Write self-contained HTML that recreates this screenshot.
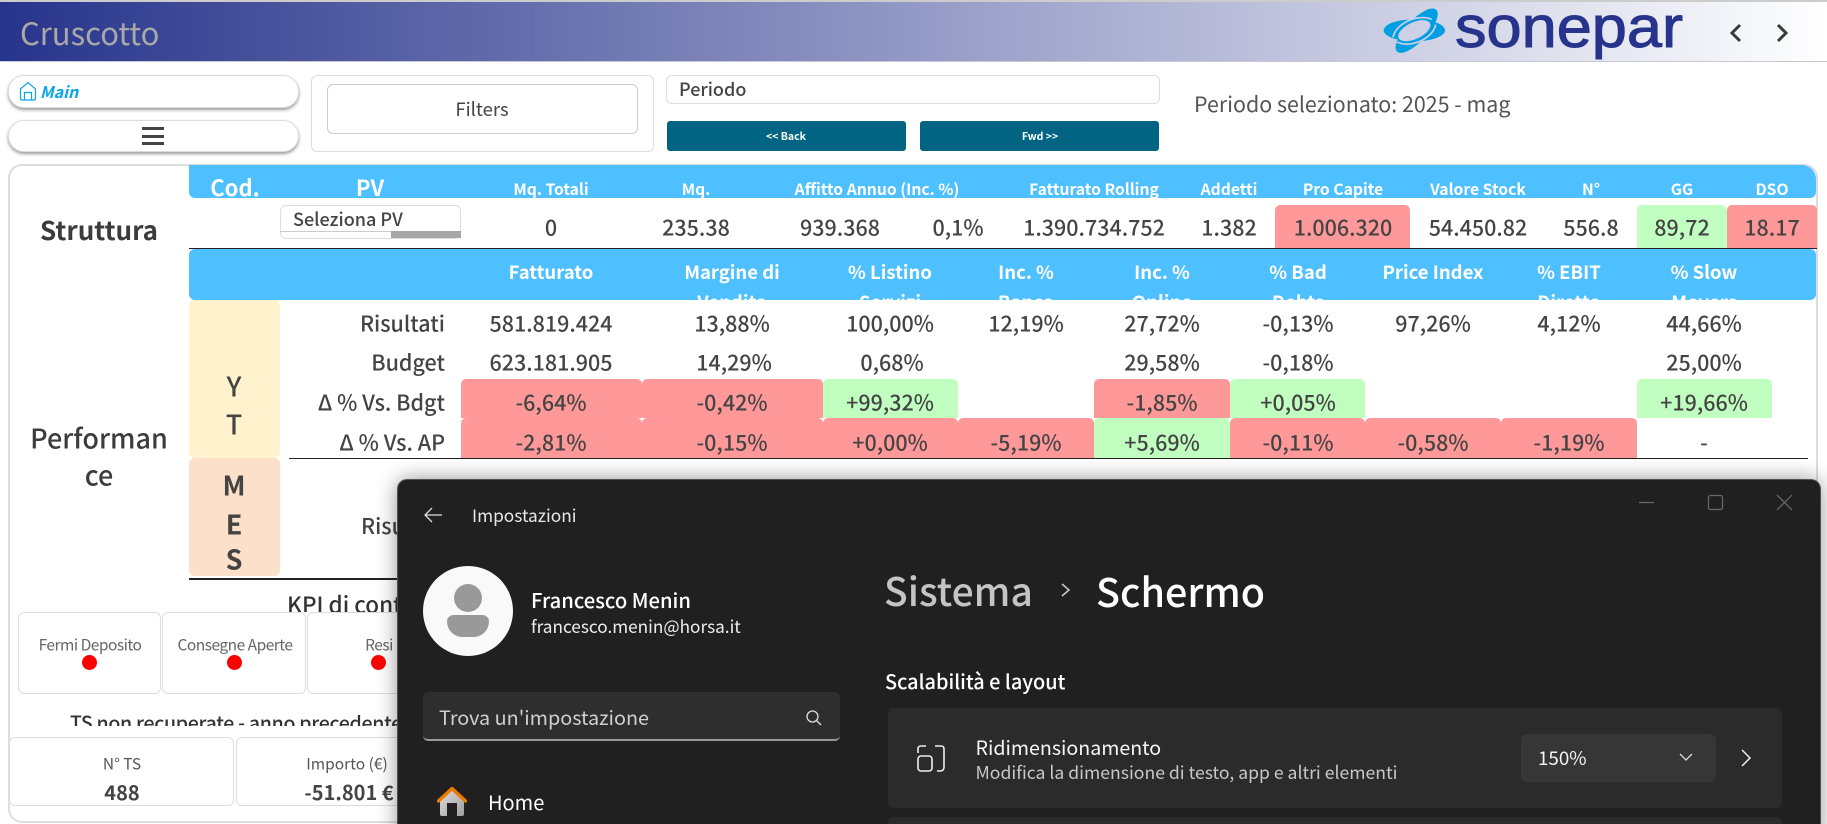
<!DOCTYPE html>
<html lang="it"><head><meta charset="utf-8"><title>Cruscotto</title>
<style>
*{box-sizing:border-box}
html,body{margin:0;padding:0;width:1827px;height:824px;overflow:hidden;background:#fff}
body{position:relative;font-family:"Noto Sans CJK JP","Liberation Sans",sans-serif;color:#444}
.a{position:absolute}
.t{position:absolute;white-space:nowrap;line-height:1}
.c{position:absolute;white-space:nowrap;line-height:1;transform:translate(-50%,-50%);text-align:center}
.v{font-size:21.5px;font-weight:500;color:#444}
.l{position:absolute;white-space:nowrap;line-height:1;transform:translateY(-50%);right:1382px;font-size:21.5px;font-weight:500;color:#444}
.h1{font-size:15.7px;font-weight:700;color:#fff}
.h2{font-size:18.5px;font-weight:700;color:#fff;line-height:30px;white-space:normal;text-align:center;transform:translateX(-50%);position:absolute;top:257px;width:130px}
.r{position:absolute;background:#ff9999;border-radius:5px 5px 0 0}
.g{position:absolute;background:#c1ffc1;border-radius:5px 5px 0 0}
.box{position:absolute;background:#fff;border:1px solid #ddd;border-radius:6px}
.k{font-size:15.5px;color:#666;font-weight:400;letter-spacing:-.5px}
.dot{position:absolute;width:15px;height:15px;border-radius:50%;background:#f00}
</style></head><body>

<!-- header -->
<div class="a" style="left:0;top:0;width:1827px;height:62px;background:linear-gradient(90deg,#27348b,#fff);border-top:2px solid #ccc;border-bottom:1px solid #c8c8d4"></div>
<div class="t" style="left:20px;top:16px;font-size:31px;color:#a9a9a9;font-weight:400">Cruscotto</div>
<svg class="a" style="left:1375px;top:0" width="90" height="62" viewBox="0 0 270 186">
<g fill="#009fe3">
<ellipse cx="118" cy="91" rx="92" ry="33"/>
<ellipse cx="125" cy="92" rx="86" ry="32" transform="rotate(-47 125 92)"/>
</g>
<ellipse cx="118" cy="92" rx="52" ry="25" transform="rotate(-25 118 92)" fill="#ced1e5"/>
<g fill="none" stroke="#ced1e5" stroke-width="5">
<path d="M54 112C62 70 128 40 170 58"/>
<path d="M182 74C174 116 106 146 66 126"/>
</g></svg>
<svg class="a" style="left:1450px;top:0" width="240" height="62"><text x="5" y="47" font-family="Liberation Sans" font-size="58" fill="#27348b" stroke="#27348b" stroke-width="1" textLength="228" lengthAdjust="spacingAndGlyphs">sonepar</text></svg>
<svg class="a" style="left:1725px;top:22px" width="70" height="22" fill="none" stroke="#3a3a3a" stroke-width="3"><path d="M15 3L7 11L15 19"/><path d="M53 3L61 11L53 19"/></svg>

<!-- left buttons -->
<div class="a" style="left:8px;top:75px;width:291px;height:33px;border:1px solid #ddd;border-radius:16px;box-shadow:0 2px 3px rgba(0,0,0,.4);background:#fff"></div>
<svg class="a" style="left:19px;top:81px" width="18" height="20" fill="none" stroke="#0ea5e9" stroke-width="1.2"><path d="M1.5 8L9 1.5L16.5 8V17.5Q16.5 19 15 19H3Q1.5 19 1.5 17.5Z"/><path d="M5.5 19V11.5H12.5V19"/></svg>
<div class="t" style="left:40px;top:83px;font-size:16px;font-weight:700;font-style:italic;color:#0ea5e9">Main</div>
<div class="a" style="left:8px;top:120px;width:291px;height:32px;border:1px solid #ddd;border-radius:16px;box-shadow:0 2px 3px rgba(0,0,0,.4);background:#fff"></div>
<div class="a" style="left:142px;top:127px;width:22px;height:18px;border-top:3px solid #444;border-bottom:3px solid #444"></div>
<div class="a" style="left:142px;top:135px;width:22px;height:3px;background:#444"></div>

<!-- filters -->
<div class="box" style="left:311px;top:75px;width:343px;height:77px"></div>
<div class="box" style="left:327px;top:84px;width:311px;height:50px;border-color:#ccc"></div>
<div class="c" style="left:482px;top:109px;font-size:18.5px;color:#444">Filters</div>
<div class="box" style="left:666px;top:75px;width:494px;height:29px"></div>
<div class="t" style="left:679px;top:80px;font-size:18px;font-weight:500;color:#444">Periodo</div>
<div class="a" style="left:667px;top:121px;width:239px;height:30px;background:#006482;border-radius:3px"></div>
<div class="a" style="left:920px;top:121px;width:239px;height:30px;background:#006482;border-radius:3px"></div>
<div class="c" style="left:786px;top:137px;font-size:10.5px;font-weight:700;color:#fff">&lt;&lt; Back</div>
<div class="c" style="left:1040px;top:137px;font-size:10.5px;font-weight:700;color:#fff">Fwd &gt;&gt;</div>
<div class="t" style="left:1194px;top:93px;font-size:21.4px;color:#555">Periodo selezionato: 2025 - mag</div>

<!-- card -->
<div class="a" style="left:8px;top:164px;width:1810px;height:659px;border:2px solid #ddd;border-radius:14px;background:#fff"></div>
<div class="a" style="left:189px;top:165px;width:1627px;height:33px;background:#4fc0ff;border-radius:0 14px 6px 6px;overflow:hidden">
 <div class="c h1" style="left:46px;top:22px;font-size:22px">Cod.</div>
 <div class="c h1" style="left:181px;top:22px;font-size:22px">PV</div>
 <div class="c h1" style="left:362px;top:24px">Mq. Totali</div>
 <div class="c h1" style="left:507px;top:24px">Mq.</div>
 <div class="c h1" style="left:688px;top:24px">Affitto Annuo (Inc. %)</div>
 <div class="c h1" style="left:905px;top:24px">Fatturato Rolling</div>
 <div class="c h1" style="left:1040px;top:24px">Addetti</div>
 <div class="c h1" style="left:1154px;top:24px">Pro Capite</div>
 <div class="c h1" style="left:1289px;top:24px">Valore Stock</div>
 <div class="c h1" style="left:1402px;top:24px">N°</div>
 <div class="c h1" style="left:1493px;top:24px">GG</div>
 <div class="c h1" style="left:1583px;top:24px">DSO</div>
</div>
<div class="c" style="left:99px;top:230px;font-size:26px;font-weight:700;color:#3c3c3c">Struttura</div>

<div class="box" style="left:280px;top:205px;width:181px;height:34px"></div>
<div class="t" style="left:293px;top:210px;font-size:18px;font-weight:500;color:#444">Seleziona PV</div>
<div class="a" style="left:280px;top:231px;width:181px;height:1px;background:#ccc"></div>
<div class="a" style="left:391px;top:231px;width:70px;height:7px;background:#a6a6a6"></div>

<div class="r" style="left:1275px;top:205px;width:135px;height:43px"></div>
<div class="g" style="left:1637px;top:205px;width:90px;height:43px"></div>
<div class="r" style="left:1727px;top:205px;width:90px;height:43px"></div>
<div class="c v" style="left:551px;top:227px">0</div>
<div class="c v" style="left:696px;top:227px">235.38</div>
<div class="c v" style="left:840px;top:227px">939.368</div>
<div class="c v" style="left:958px;top:227px">0,1%</div>
<div class="c v" style="left:1094px;top:227px">1.390.734.752</div>
<div class="c v" style="left:1229px;top:227px">1.382</div>
<div class="c v" style="left:1343px;top:227px">1.006.320</div>
<div class="c v" style="left:1478px;top:227px">54.450.82</div>
<div class="c v" style="left:1591px;top:227px">556.8</div>
<div class="c v" style="left:1682px;top:227px">89,72</div>
<div class="c v" style="left:1772px;top:227px">18.17</div>

<div class="a" style="left:189px;top:248px;width:1628px;height:1px;background:#222"></div>

<!-- blue header 2 -->
<div class="a" style="left:189px;top:249px;width:1627px;height:51px;background:#4fc0ff;border-radius:6px;overflow:hidden">
 <div class="h2" style="left:362px;top:8px">Fatturato</div>
 <div class="h2" style="left:543px;top:8px">Margine di Vendita</div>
 <div class="h2" style="left:701px;top:8px">% Listino Servizi</div>
 <div class="h2" style="left:837px;top:8px;width:100px">Inc. % Banco</div>
 <div class="h2" style="left:973px;top:8px;width:100px">Inc. % Online</div>
 <div class="h2" style="left:1109px;top:8px;width:100px">% Bad Debts</div>
 <div class="h2" style="left:1244px;top:8px">Price Index</div>
 <div class="h2" style="left:1380px;top:8px;width:100px">% EBIT Diretto</div>
 <div class="h2" style="left:1515px;top:8px;width:100px">% Slow Movers</div>
</div>

<!-- YT / MES -->
<div class="a" style="left:189px;top:300px;width:91px;height:158px;background:#fff2cc;border-radius:6px"></div>
<div class="c" style="left:234px;top:385px;font-size:27px;font-weight:500;color:#444">Y</div>
<div class="c" style="left:234px;top:423px;font-size:27px;font-weight:500;color:#444">T</div>
<div class="a" style="left:189px;top:458px;width:91px;height:118px;background:#fde0c9;border-radius:6px"></div>
<div class="c" style="left:234px;top:484px;font-size:27px;font-weight:700;color:#444">M</div>
<div class="c" style="left:234px;top:523px;font-size:27px;font-weight:700;color:#444">E</div>
<div class="c" style="left:234px;top:558px;font-size:27px;font-weight:700;color:#444">S</div>
<div class="c" style="left:99px;top:437px;font-size:27px;font-weight:500;color:#3c3c3c">Performan</div>
<div class="c" style="left:99px;top:474px;font-size:27px;font-weight:500;color:#3c3c3c">ce</div>

<!-- labels -->
<div class="l" style="top:323px">Risultati</div>
<div class="l" style="top:362px">Budget</div>
<div class="l" style="top:402px">Δ % Vs. Bdgt</div>
<div class="l" style="top:442px">Δ % Vs. AP</div>

<!-- coloured cells -->
<div class="r" style="left:461px;top:379px;width:181px;height:39px"></div>
<div class="r" style="left:642px;top:379px;width:181px;height:39px"></div>
<div class="g" style="left:823px;top:379px;width:135px;height:39px"></div>
<div class="r" style="left:1094px;top:379px;width:136px;height:39px"></div>
<div class="g" style="left:1230px;top:379px;width:135px;height:39px"></div>
<div class="g" style="left:1637px;top:379px;width:135px;height:39px"></div>
<div class="r" style="left:461px;top:418px;width:181px;height:40px"></div>
<div class="r" style="left:642px;top:418px;width:181px;height:40px"></div>
<div class="r" style="left:823px;top:418px;width:135px;height:40px"></div>
<div class="r" style="left:958px;top:418px;width:136px;height:40px"></div>
<div class="g" style="left:1094px;top:418px;width:136px;height:40px"></div>
<div class="r" style="left:1230px;top:418px;width:135px;height:40px"></div>
<div class="r" style="left:1365px;top:418px;width:136px;height:40px"></div>
<div class="r" style="left:1501px;top:418px;width:136px;height:40px"></div>
<div class="a" style="left:289px;top:458px;width:1519px;height:1px;background:#222"></div>

<!-- values -->
<div class="c v" style="left:551px;top:323px">581.819.424</div>
<div class="c v" style="left:732px;top:323px">13,88%</div>
<div class="c v" style="left:890px;top:323px">100,00%</div>
<div class="c v" style="left:1026px;top:323px">12,19%</div>
<div class="c v" style="left:1162px;top:323px">27,72%</div>
<div class="c v" style="left:1298px;top:323px">-0,13%</div>
<div class="c v" style="left:1433px;top:323px">97,26%</div>
<div class="c v" style="left:1569px;top:323px">4,12%</div>
<div class="c v" style="left:1704px;top:323px">44,66%</div>
<div class="c v" style="left:551px;top:362px">623.181.905</div>
<div class="c v" style="left:734px;top:362px">14,29%</div>
<div class="c v" style="left:892px;top:362px">0,68%</div>
<div class="c v" style="left:1162px;top:362px">29,58%</div>
<div class="c v" style="left:1298px;top:362px">-0,18%</div>
<div class="c v" style="left:1704px;top:362px">25,00%</div>
<div class="c v" style="left:551px;top:402px">-6,64%</div>
<div class="c v" style="left:732px;top:402px">-0,42%</div>
<div class="c v" style="left:890px;top:402px">+99,32%</div>
<div class="c v" style="left:1162px;top:402px">-1,85%</div>
<div class="c v" style="left:1298px;top:402px">+0,05%</div>
<div class="c v" style="left:1704px;top:402px">+19,66%</div>
<div class="c v" style="left:551px;top:442px">-2,81%</div>
<div class="c v" style="left:732px;top:442px">-0,15%</div>
<div class="c v" style="left:890px;top:442px">+0,00%</div>
<div class="c v" style="left:1026px;top:442px">-5,19%</div>
<div class="c v" style="left:1162px;top:442px">+5,69%</div>
<div class="c v" style="left:1298px;top:442px">-0,11%</div>
<div class="c v" style="left:1433px;top:442px">-0,58%</div>
<div class="c v" style="left:1569px;top:442px">-1,19%</div>
<div class="c v" style="left:1704px;top:442px">-</div>

<div class="t" style="left:361px;top:515px;font-size:21.5px;font-weight:500;color:#444">Risultati</div>
<div class="a" style="left:189px;top:578px;width:400px;height:2px;background:#222"></div>

<div class="a" style="left:287px;top:590px;width:200px;height:22px;overflow:hidden"><div class="t" style="left:0;top:3px;font-size:22.5px;font-weight:500;color:#333">KPI di controllo</div></div>

<div class="box" style="left:18px;top:612px;width:143px;height:82px"></div>
<div class="box" style="left:162px;top:612px;width:144px;height:82px"></div>
<div class="box" style="left:307px;top:612px;width:144px;height:82px"></div>
<div class="c k" style="left:90px;top:645px">Fermi Deposito</div>
<div class="c k" style="left:235px;top:645px">Consegne Aperte</div>
<div class="c k" style="left:379px;top:645px">Resi</div>
<div class="dot" style="left:82px;top:655px"></div>
<div class="dot" style="left:227px;top:655px"></div>
<div class="dot" style="left:371px;top:655px"></div>

<div class="a" style="left:70px;top:710px;width:400px;height:16px;overflow:hidden"><div class="t" style="left:0;top:2px;font-size:19.5px;font-weight:500;letter-spacing:-.3px;color:#333">TS non recuperate - anno precedente</div></div>

<div class="box" style="left:9px;top:737px;width:225px;height:69px"></div>
<div class="box" style="left:236px;top:737px;width:225px;height:69px"></div>
<div class="c" style="left:122px;top:764px;font-size:15.5px;color:#555">N° TS</div>
<div class="c" style="left:122px;top:792px;font-size:20px;font-weight:700;color:#444">488</div>
<div class="c" style="left:347px;top:764px;font-size:15.5px;color:#555">Importo (€)</div>
<div class="c" style="left:349px;top:792px;font-size:20px;font-weight:700;color:#444">-51.801 €</div>

<!-- settings window -->
<div class="a" style="left:398px;top:480px;width:1422px;height:360px;background:#202020;border-radius:9px 9px 0 0;box-shadow:0 0 22px rgba(0,0,0,.45),0 0 0 1px #666;overflow:hidden;color:#fff">
<div class="a" style="left:-1px;top:-1px;width:1423px;height:361px">
 <svg class="a" style="left:26px;top:26px" width="20" height="20" fill="none" stroke="#ddd" stroke-width="1.3"><path d="M19 10H2"/><path d="M9 3L2 10L9 17"/></svg>
 <div class="t" style="left:75px;top:27px;font-size:17.3px;color:#e8e8e8">Impostazioni</div>
 <div class="a" style="left:26px;top:87px;width:90px;height:90px;border-radius:50%;background:#f9f9f9"></div>
 <div class="a" style="left:57px;top:105px;width:28px;height:28px;border-radius:50%;background:#999"></div>
 <div class="a" style="left:50px;top:136px;width:42px;height:22px;border-radius:8px 8px 19px 19px;background:#999"></div>
 <div class="t" style="left:134px;top:111px;font-size:20.2px;font-weight:500;color:#fff">Francesco Menin</div>
 <div class="t" style="left:134px;top:138px;font-size:17.2px;color:#eee">francesco.menin@horsa.it</div>
 <div class="a" style="left:26px;top:213px;width:417px;height:49px;background:#2e2e2e;border-radius:5px;border-bottom:2px solid #9a9a9a"></div>
 <div class="t" style="left:42px;top:228px;font-size:19.8px;color:#cfcfcf">Trova un'impostazione</div>
 <svg class="a" style="left:408px;top:230px" width="18" height="18" fill="none" stroke="#ddd" stroke-width="1.3"><circle cx="7.5" cy="7.5" r="5.5"/><path d="M11.5 11.5L16 16"/></svg>
 <svg class="a" style="left:40px;top:308px" width="30" height="30"><defs><linearGradient id="hg" x1="0" y1="0" x2="1" y2="1"><stop offset="0" stop-color="#dcdcdc"/><stop offset="1" stop-color="#a0a0a0"/></linearGradient></defs><path d="M3 14L15 3L27 14V27Q27 29 25 29H20V16H10V29H5Q3 29 3 27Z" fill="url(#hg)"/><path d="M1.5 14L15 1.5L28.5 14" fill="none" stroke="#ec7a00" stroke-width="3.5" stroke-linecap="round" stroke-linejoin="round"/></svg>
 <div class="t" style="left:91px;top:313px;font-size:20px;color:#fff">Home</div>

 <div class="t" style="left:487px;top:92px;font-size:39px;font-weight:500;color:#c4c4c4">Sistema</div>
 <svg class="a" style="left:662px;top:102px" width="14" height="18" fill="none" stroke="#ccc" stroke-width="1.5"><path d="M3 3L10 9L3 15"/></svg>
 <div class="t" style="left:699px;top:92px;font-size:39.5px;font-weight:500;color:#fff">Schermo</div>
 <div class="t" style="left:488px;top:192px;font-size:19.9px;font-weight:500;color:#fff">Scalabilità e layout</div>
 <div class="a" style="left:491px;top:229px;width:894px;height:100px;background:#2b2b2b;border-radius:5px"></div>
 <div class="a" style="left:491px;top:338px;width:894px;height:40px;background:#2b2b2b;border-radius:5px"></div>
 <svg class="a" style="left:520px;top:266px" width="28" height="27" fill="none" stroke="#eee" stroke-width="1.6"><path d="M1 8V4Q1 1 4 1H9"/><path d="M18 1H24Q27 1 27 4V20"/><path d="M27 20V22Q27 26 23 26H20"/><rect x="1" y="11" width="14" height="15" rx="3"/></svg>
 <div class="t" style="left:578.5px;top:258px;font-size:19.6px;color:#f5f5f5">Ridimensionamento</div>
 <div class="t" style="left:578.5px;top:285px;font-size:17.6px;color:#c8c8c8">Modifica la dimensione di testo, app e altri elementi</div>
 <div class="a" style="left:1124px;top:255px;width:195px;height:48px;background:#363636;border-radius:6px"></div>
 <div class="t" style="left:1141px;top:270px;font-size:18.8px;color:#f5f5f5">150%</div>
 <svg class="a" style="left:1282px;top:273px" width="14" height="10" fill="none" stroke="#ddd" stroke-width="1.3"><path d="M1 2L7 8L13 2"/></svg>
 <svg class="a" style="left:1343px;top:269px" width="12" height="20" fill="none" stroke="#eee" stroke-width="1.5"><path d="M2 2L10 10L2 18"/></svg>
 <svg class="a" style="left:1240px;top:14px" width="160" height="20" fill="none" stroke="#6a6a6a" stroke-width="1.2"><path d="M2 9.5H17"/><rect x="71.5" y="2.5" width="14" height="14" rx="2"/><path d="M140 2L155 17M155 2L140 17"/></svg>
</div>
</div>
</body></html>
